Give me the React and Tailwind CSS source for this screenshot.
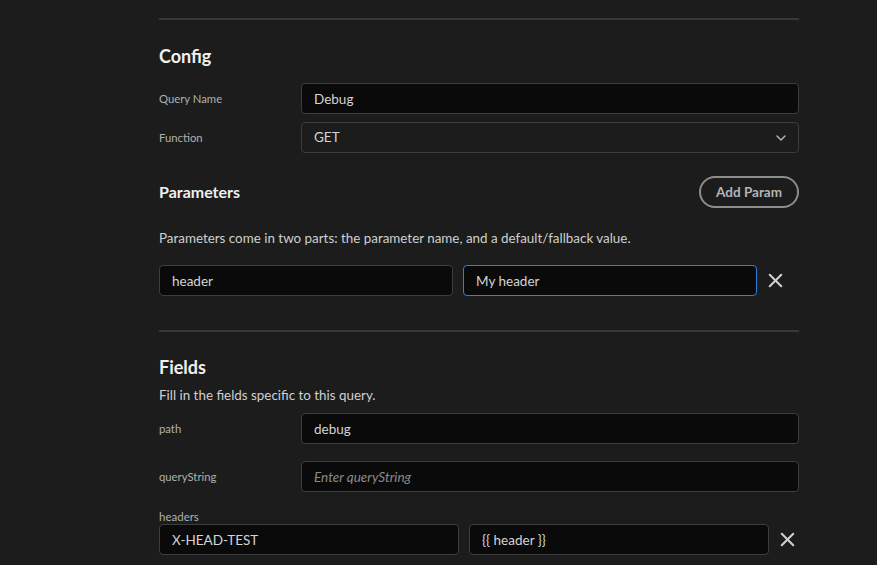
import React, { useState } from "react";
import { ChevronDown, X } from "lucide-react";

const font = { fontFamily: "Lato, 'Open Sans', sans-serif" };

const baseInput =
  "h-[31px] shrink-0 rounded-[4px] border bg-[#0a0a0a] px-3 text-[13.5px] text-[#d4d4d4] placeholder:italic placeholder:text-[#8a8a8a] outline-none";
const inputCls = baseInput + " w-full border-[#3d3d3d]";

const Row = ({ label, children }) => (
  <div className="grid grid-cols-[142px_1fr] items-center">
    <span className="mt-[2px] text-[11.3px] text-[#b0b0b0]">{label}</span>
    {children}
  </div>
);

const Divider = () => <div className="h-[2px] bg-[#383838]" />;

const Remove = () => (
  <button className="ml-[-3px] shrink-0 text-[#d0d0d0]">
    <X size={23} strokeWidth={2.2} />
  </button>
);

const App = () => {
  const [name, setName] = useState("Debug");
  const [param, setParam] = useState({ key: "header", value: "My header" });
  const [path, setPath] = useState("debug");
  const [qs, setQs] = useState("");

  return (
    <div className="min-h-screen w-full bg-[#1c1c1c] text-[#e8e8e8]" style={font}>
      <div className="w-[640px] pt-[18px] ml-[159px]">
        <Divider />

        <h2 className="mt-[24px] text-[18px] font-bold leading-6 text-[#f0f0f0]">Config</h2>
        <div className="mt-[15px] flex flex-col gap-[8px]">
          <Row label="Query Name">
            <input className={inputCls} value={name} onChange={(e) => setName(e.target.value)} />
          </Row>
          <Row label="Function">
            <div className="relative">
              <select
                className={baseInput + " w-full border-[#3d3d3d] appearance-none !bg-[#1c1c1c]"}
                defaultValue="GET"
              >
                <option>GET</option>
                <option>POST</option>
              </select>
              <ChevronDown size={16} className="absolute right-[10px] top-[8px] text-[#bbbbbb] pointer-events-none" />
            </div>
          </Row>
        </div>

        <div className="mt-[23px] flex items-center justify-between">
          <h3 className="text-[16px] font-bold text-[#f0f0f0]">Parameters</h3>
          <button className="h-[32px] rounded-full border-2 border-[#8c8c8c] px-[15px] text-[13.5px] font-bold text-[#b5b5b5]">
            Add Param
          </button>
        </div>
        <p className="mt-[20px] text-[13.4px] text-[#cfcfcf]">
          Parameters come in two parts: the parameter name, and a default/fallback value.
        </p>
        <div className="mt-[17px] flex items-center gap-[10px]">
          <input
            className={baseInput + " w-[294px] border-[#3d3d3d]"}
            value={param.key}
            onChange={(e) => setParam({ ...param, key: e.target.value })}
          />
          <input
            autoFocus
            className={baseInput + " w-[294px] border-[#2f7fe0]"}
            value={param.value}
            onChange={(e) => setParam({ ...param, value: e.target.value })}
          />
          <Remove />
        </div>

        <div className="mt-[34px]">
          <Divider />
        </div>

        <h2 className="mt-[23px] text-[18px] font-bold leading-6 text-[#f0f0f0]">Fields</h2>
        <p className="mt-[6px] text-[13.4px] text-[#cfcfcf]">Fill in the fields specific to this query.</p>
        <div className="mt-[8px] flex flex-col gap-[17px]">
          <Row label="path">
            <input className={inputCls} value={path} onChange={(e) => setPath(e.target.value)} />
          </Row>
          <Row label="queryString">
            <input
              className={inputCls}
              placeholder="Enter queryString"
              value={qs}
              onChange={(e) => setQs(e.target.value)}
            />
          </Row>
        </div>
        <div className="mt-[17px]">
          <span className="block text-[11.5px] leading-[15px] text-[#b0b0b0]">headers</span>
          <div className="flex items-center gap-[10px]">
            <input className={baseInput + " w-[300px] border-[#3d3d3d]"} defaultValue="X-HEAD-TEST" />
            <input className={baseInput + " w-[300px] border-[#3d3d3d]"} defaultValue="{{ header }}" />
            <Remove />
          </div>
        </div>
      </div>
    </div>
  );
};

export default App;
